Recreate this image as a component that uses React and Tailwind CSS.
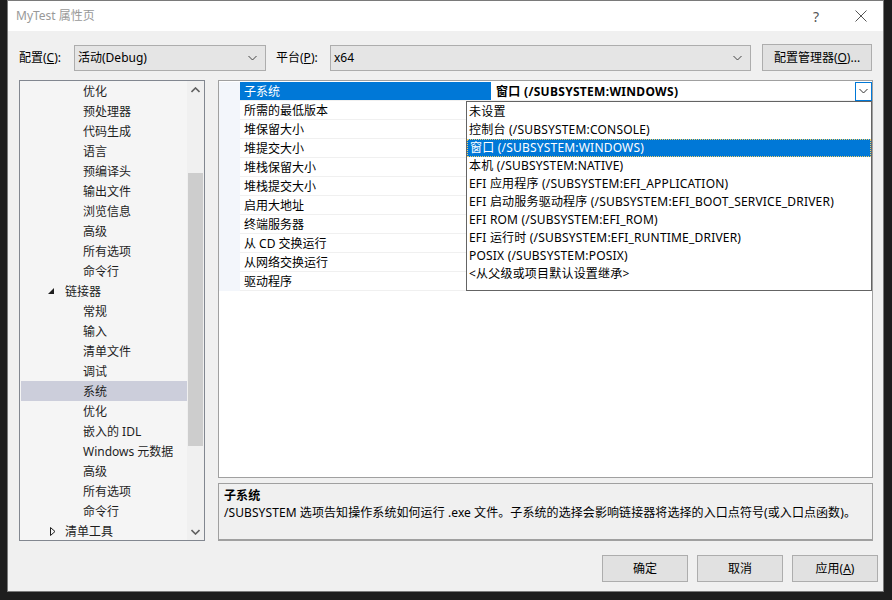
const font = { fontFamily: '"Noto Sans", "Noto Sans CJK SC", sans-serif' }

const treeRows = [
  { label: '优化', level: 2 },
  { label: '预处理器', level: 2 },
  { label: '代码生成', level: 2 },
  { label: '语言', level: 2 },
  { label: '预编译头', level: 2 },
  { label: '输出文件', level: 2 },
  { label: '浏览信息', level: 2 },
  { label: '高级', level: 2 },
  { label: '所有选项', level: 2 },
  { label: '命令行', level: 2 },
  { label: '链接器', level: 1, open: true },
  { label: '常规', level: 2 },
  { label: '输入', level: 2 },
  { label: '清单文件', level: 2 },
  { label: '调试', level: 2 },
  { label: '系统', level: 2, selected: true },
  { label: '优化', level: 2 },
  { label: '嵌入的 IDL', level: 2 },
  { label: 'Windows 元数据', level: 2 },
  { label: '高级', level: 2 },
  { label: '所有选项', level: 2 },
  { label: '命令行', level: 2 },
  { label: '清单工具', level: 1, open: false },
]

const props = [
  '子系统',
  '所需的最低版本',
  '堆保留大小',
  '堆提交大小',
  '堆栈保留大小',
  '堆栈提交大小',
  '启用大地址',
  '终端服务器',
  '从 CD 交换运行',
  '从网络交换运行',
  '驱动程序',
]

const options = [
  '未设置',
  '控制台 (/SUBSYSTEM:CONSOLE)',
  '窗口 (/SUBSYSTEM:WINDOWS)',
  '本机 (/SUBSYSTEM:NATIVE)',
  'EFI 应用程序 (/SUBSYSTEM:EFI_APPLICATION)',
  'EFI 启动服务驱动程序 (/SUBSYSTEM:EFI_BOOT_SERVICE_DRIVER)',
  'EFI ROM (/SUBSYSTEM:EFI_ROM)',
  'EFI 运行时 (/SUBSYSTEM:EFI_RUNTIME_DRIVER)',
  'POSIX (/SUBSYSTEM:POSIX)',
  '<从父级或项目默认设置继承>',
]

function Chevron({ up, className = '', stroke = '#606060', width = 1 }) {
  return (
    <svg width="9" height="6" viewBox="0 0 9 6" className={className}>
      <polyline
        points={up ? '0.5,5 4.5,1 8.5,5' : '0.5,1 4.5,5 8.5,1'}
        fill="none"
        stroke={stroke}
        strokeWidth={width}
      />
    </svg>
  )
}

function Combo({ value, width }) {
  return (
    <div
      className={`${width} flex h-[26px] items-center justify-between border border-[#adadad] bg-[#e5e5e5] pl-[3px] pr-[8px] text-[12px] text-black`}
    >
      <span>{value}</span>
      <Chevron stroke="#444" />
    </div>
  )
}

function TreeRow({ row }) {
  return (
    <div
      className={[
        'flex h-[20px] items-center pt-[1px] text-[12px] text-[#1e1e1e]',
        row.selected ? 'bg-[#cccedb]' : '',
      ].join(' ')}
    >
      {row.level === 1 ? (
        <>
          <span className="ml-[27px] flex w-[17px] items-center">
            {row.open ? (
              <svg width="7" height="7" viewBox="0 0 7 7">
                <polygon points="6,0 6,6 0,6" fill="#1e1e1e" />
              </svg>
            ) : (
              <svg width="6" height="9" viewBox="0 0 6 9" className="ml-[2px]">
                <polygon points="0.5,0.5 5,4.5 0.5,8.5" fill="none" stroke="#1e1e1e" />
              </svg>
            )}
          </span>
          <span>{row.label}</span>
        </>
      ) : (
        <span className="ml-[62px]">{row.label}</span>
      )}
    </div>
  )
}

export default function App() {
  return (
    <div className="h-[600px] w-[892px] overflow-hidden bg-[#1e1e1e] pl-[7px]" style={font}>
      <div className="flex h-[592px] w-[877px] flex-col border border-[#7a7a7a] bg-[#f0f0f0]">
        {/* Title bar */}
        <div className="flex h-[30px] shrink-0 items-center justify-between bg-white pl-[8px] pr-[16px]">
          <span className="text-[12px] text-[#999999]">MyTest 属性页</span>
          <div className="flex items-center gap-[36px]">
            <span className="text-[14px] text-[#555]">?</span>
            <svg width="12" height="12" viewBox="0 0 12 12">
              <path d="M0.5 0.5L11.5 11.5M11.5 0.5L0.5 11.5" stroke="#555" strokeWidth="1" />
            </svg>
          </div>
        </div>

        {/* Config row */}
        <div className="mt-[13px] flex h-[27px] items-center pl-[11px] text-[12px] text-black">
          <span className="w-[55px]">
            配置(<span className="underline">C</span>):
          </span>
          <Combo value="活动(Debug)" width="w-[192px]" />
          <span className="ml-[10px] w-[54px]">
            平台(<span className="underline">P</span>):
          </span>
          <Combo value="x64" width="w-[421px]" />
          <button
            type="button"
            className="ml-[11px] h-[27px] w-[110px] border border-[#adadad] bg-[#e1e1e1] text-[12px] text-black"
          >
            配置管理器(<span className="underline">O</span>)...
          </button>
        </div>

        {/* Main area */}
        <div className="mt-[9px] flex h-[461px] pl-[11px]">
          {/* Tree */}
          <div className="flex h-[461px] w-[186px] border border-[#828790] bg-[#f5f5f5]">
            <div className="flex-1 overflow-hidden pl-[1px]">
              {treeRows.map((row, i) => (
                <TreeRow key={i} row={row} />
              ))}
            </div>
            <div className="flex w-[17px] flex-col items-center bg-[#f0f0f0]">
              <div className="flex h-[17px] items-center">
                <Chevron up stroke="#606060" width={1.6} />
              </div>
              <div className="mt-[75px] h-[273px] w-[15px] bg-[#cdcdcd]" />
              <div className="flex-1" />
              <div className="flex h-[17px] items-center">
                <Chevron stroke="#606060" width={1.6} />
              </div>
            </div>
          </div>

          {/* Right column */}
          <div className="ml-[13px] flex w-[655px] flex-col">
            <div className="relative h-[398px] border border-[#a0a0a0] bg-white pt-[1px]">
              {props.map((name, i) => (
                <div key={name} className="flex h-[19px] text-[12px] text-black">
                  <div className="w-[21px] bg-[#f3f6fb]" />
                  <div className="flex flex-1 border-b border-[#f0f0f0]">
                    <div
                      className={[
                        'flex w-[251px] items-center pl-[4px] pt-[1px]',
                        i === 0 ? 'bg-[#0078d7] text-white' : '',
                      ].join(' ')}
                    >
                      {name}
                    </div>
                    <div className="flex flex-1 items-center justify-between">
                      {i === 0 && (
                        <>
                          <span className="pl-[5px] pt-[1px] font-bold tracking-[0.3px]">窗口 (/SUBSYSTEM:WINDOWS)</span>
                          <span className="flex h-[19px] w-[17px] items-center justify-center border border-[#0078d7] bg-white">
                            <Chevron stroke="#333" />
                          </span>
                        </>
                      )}
                    </div>
                  </div>
                </div>
              ))}

              {/* Open dropdown list */}
              <div className="absolute left-[247px] top-[20px] h-[190px] w-[406px] border border-[#646464] bg-white pt-[1px] text-[12px] tracking-[0.2px] text-black">
                {options.map((opt, i) => (
                  <div
                    key={opt}
                    className={[
                      'flex h-[18px] items-center pl-[2px]',
                      i === 2 ? 'border border-dotted border-[#f5d36a] bg-[#0078d7] pl-[1px] text-white' : '',
                    ].join(' ')}
                  >
                    {opt}
                  </div>
                ))}
              </div>
            </div>

            {/* Description */}
            <div className="mt-[5px] h-[58px] border border-b-2 border-[#a0a0a0] bg-[#f0f0f0] pl-[5px] pt-[3px] text-[12px] leading-[17px] tracking-[0.08px] text-black">
              <div className="font-bold">子系统</div>
              <div>/SUBSYSTEM 选项告知操作系统如何运行 .exe 文件。子系统的选择会影响链接器将选择的入口点符号(或入口点函数)。</div>
            </div>
          </div>
        </div>

        {/* Buttons */}
        <div className="mt-[14px] flex justify-end gap-[9px] pr-[5px]">
          {['确定', '取消'].map((t) => (
            <button
              key={t}
              type="button"
              className="h-[27px] w-[86px] border border-[#adadad] bg-[#e1e1e1] text-[12px] text-black"
            >
              {t}
            </button>
          ))}
          <button
            type="button"
            className="h-[27px] w-[86px] border border-[#adadad] bg-[#e1e1e1] text-[12px] text-black"
          >
            应用(<span className="underline">A</span>)
          </button>
        </div>
      </div>
    </div>
  )
}
